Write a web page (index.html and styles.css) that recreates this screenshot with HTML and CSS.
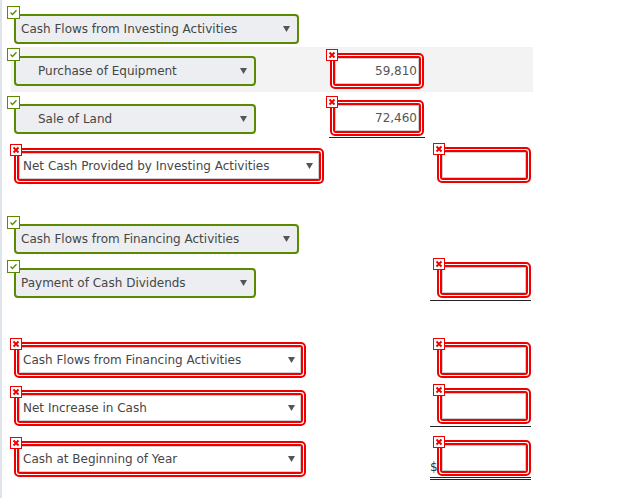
FILE: index.html
```html
<!DOCTYPE html>
<html>
<head>
<meta charset="utf-8">
<link rel="stylesheet" href="styles.css">
</head>
<body>
<div class="page">

  <div class="row r1">
    <div class="lab">
      <div class="sel ok w-long">
        <span class="chk"><svg viewBox="0 0 11 11" width="11" height="11"><path d="M2.5 5.5 L4.5 7.5 L8.5 3.2" fill="none" stroke="#5a8a00" stroke-width="1.3"/></svg></span>
        <span class="txt">Cash Flows from Investing Activities</span>
        <svg class="arr" viewBox="0 0 7 6" width="7" height="6"><path d="M0 0 H7 L3.5 6 Z" fill="#555"/></svg>
      </div>
    </div>
  </div>

  <div class="row r2 band">
    <div class="lab">
      <div class="sel ok w-short indent">
        <span class="chk"><svg viewBox="0 0 11 11" width="11" height="11"><path d="M2.5 5.5 L4.5 7.5 L8.5 3.2" fill="none" stroke="#5a8a00" stroke-width="1.3"/></svg></span>
        <span class="txt">Purchase of Equipment</span>
        <svg class="arr" viewBox="0 0 7 6" width="7" height="6"><path d="M0 0 H7 L3.5 6 Z" fill="#555"/></svg>
      </div>
    </div>
    <div class="c1">
      <div class="inp">
        <span class="xmark"><svg viewBox="0 0 10 10" width="10" height="10"><path d="M2.5 2.5 L7.5 7.5 M7.5 2.5 L2.5 7.5" stroke="#e00" stroke-width="2"/></svg></span>
        <div class="inner"><div class="field num">59,810</div></div>
      </div>
    </div>
  </div>

  <div class="row r3">
    <div class="lab">
      <div class="sel ok w-short indent">
        <span class="chk"><svg viewBox="0 0 11 11" width="11" height="11"><path d="M2.5 5.5 L4.5 7.5 L8.5 3.2" fill="none" stroke="#5a8a00" stroke-width="1.3"/></svg></span>
        <span class="txt">Sale of Land</span>
        <svg class="arr" viewBox="0 0 7 6" width="7" height="6"><path d="M0 0 H7 L3.5 6 Z" fill="#555"/></svg>
      </div>
    </div>
    <div class="c1 under">
      <div class="inp">
        <span class="xmark"><svg viewBox="0 0 10 10" width="10" height="10"><path d="M2.5 2.5 L7.5 7.5 M7.5 2.5 L2.5 7.5" stroke="#e00" stroke-width="2"/></svg></span>
        <div class="inner"><div class="field num">72,460</div></div>
      </div>
    </div>
  </div>

  <div class="row r4">
    <div class="lab">
      <div class="sel bad w-xl">
        <span class="xmark"><svg viewBox="0 0 10 10" width="10" height="10"><path d="M2.5 2.5 L7.5 7.5 M7.5 2.5 L2.5 7.5" stroke="#e00" stroke-width="2"/></svg></span>
        <div class="inner"><div class="field">
          <span class="txt">Net Cash Provided by Investing Activities</span>
          <svg class="arr" viewBox="0 0 7 6" width="7" height="6"><path d="M0 0 H7 L3.5 6 Z" fill="#555"/></svg>
        </div></div>
      </div>
    </div>
    <div class="c1"></div>
    <div class="c2">
      <div class="inp">
        <span class="xmark"><svg viewBox="0 0 10 10" width="10" height="10"><path d="M2.5 2.5 L7.5 7.5 M7.5 2.5 L2.5 7.5" stroke="#e00" stroke-width="2"/></svg></span>
        <div class="inner"><div class="field num"></div></div>
      </div>
    </div>
  </div>

  <div class="row r5">
    <div class="lab">
      <div class="sel ok w-long">
        <span class="chk"><svg viewBox="0 0 11 11" width="11" height="11"><path d="M2.5 5.5 L4.5 7.5 L8.5 3.2" fill="none" stroke="#5a8a00" stroke-width="1.3"/></svg></span>
        <span class="txt">Cash Flows from Financing Activities</span>
        <svg class="arr" viewBox="0 0 7 6" width="7" height="6"><path d="M0 0 H7 L3.5 6 Z" fill="#555"/></svg>
      </div>
    </div>
  </div>

  <div class="row r6">
    <div class="lab">
      <div class="sel ok w-short">
        <span class="chk"><svg viewBox="0 0 11 11" width="11" height="11"><path d="M2.5 5.5 L4.5 7.5 L8.5 3.2" fill="none" stroke="#5a8a00" stroke-width="1.3"/></svg></span>
        <span class="txt">Payment of Cash Dividends</span>
        <svg class="arr" viewBox="0 0 7 6" width="7" height="6"><path d="M0 0 H7 L3.5 6 Z" fill="#555"/></svg>
      </div>
    </div>
    <div class="c1"></div>
    <div class="c2 under">
      <div class="inp">
        <span class="xmark"><svg viewBox="0 0 10 10" width="10" height="10"><path d="M2.5 2.5 L7.5 7.5 M7.5 2.5 L2.5 7.5" stroke="#e00" stroke-width="2"/></svg></span>
        <div class="inner"><div class="field num"></div></div>
      </div>
    </div>
  </div>

  <div class="row r7">
    <div class="lab">
      <div class="sel bad w-mid">
        <span class="xmark"><svg viewBox="0 0 10 10" width="10" height="10"><path d="M2.5 2.5 L7.5 7.5 M7.5 2.5 L2.5 7.5" stroke="#e00" stroke-width="2"/></svg></span>
        <div class="inner"><div class="field">
          <span class="txt">Cash Flows from Financing Activities</span>
          <svg class="arr" viewBox="0 0 7 6" width="7" height="6"><path d="M0 0 H7 L3.5 6 Z" fill="#555"/></svg>
        </div></div>
      </div>
    </div>
    <div class="c1"></div>
    <div class="c2">
      <div class="inp">
        <span class="xmark"><svg viewBox="0 0 10 10" width="10" height="10"><path d="M2.5 2.5 L7.5 7.5 M7.5 2.5 L2.5 7.5" stroke="#e00" stroke-width="2"/></svg></span>
        <div class="inner"><div class="field num"></div></div>
      </div>
    </div>
  </div>

  <div class="row r8">
    <div class="lab">
      <div class="sel bad w-mid">
        <span class="xmark"><svg viewBox="0 0 10 10" width="10" height="10"><path d="M2.5 2.5 L7.5 7.5 M7.5 2.5 L2.5 7.5" stroke="#e00" stroke-width="2"/></svg></span>
        <div class="inner"><div class="field">
          <span class="txt">Net Increase in Cash</span>
          <svg class="arr" viewBox="0 0 7 6" width="7" height="6"><path d="M0 0 H7 L3.5 6 Z" fill="#555"/></svg>
        </div></div>
      </div>
    </div>
    <div class="c1"></div>
    <div class="c2 under">
      <div class="inp">
        <span class="xmark"><svg viewBox="0 0 10 10" width="10" height="10"><path d="M2.5 2.5 L7.5 7.5 M7.5 2.5 L2.5 7.5" stroke="#e00" stroke-width="2"/></svg></span>
        <div class="inner"><div class="field num"></div></div>
      </div>
    </div>
  </div>

  <div class="row r9">
    <div class="lab">
      <div class="sel bad w-mid">
        <span class="xmark"><svg viewBox="0 0 10 10" width="10" height="10"><path d="M2.5 2.5 L7.5 7.5 M7.5 2.5 L2.5 7.5" stroke="#e00" stroke-width="2"/></svg></span>
        <div class="inner"><div class="field">
          <span class="txt">Cash at Beginning of Year</span>
          <svg class="arr" viewBox="0 0 7 6" width="7" height="6"><path d="M0 0 H7 L3.5 6 Z" fill="#555"/></svg>
        </div></div>
      </div>
    </div>
    <div class="c1"></div>
    <div class="c2 dbl">
      <span class="dollar">$</span>
      <div class="inp nomargin">
        <span class="xmark"><svg viewBox="0 0 10 10" width="10" height="10"><path d="M2.5 2.5 L7.5 7.5 M7.5 2.5 L2.5 7.5" stroke="#e00" stroke-width="2"/></svg></span>
        <div class="inner"><div class="field num"></div></div>
      </div>
    </div>
  </div>

</div>
</body>
</html>
```

FILE: styles.css
```css
html, body {
  margin: 0;
  padding: 0;
  background: #fff;
}

body {
  font-family: "DejaVu Sans", Verdana, sans-serif;
  font-size: 12px;
  color: #464646;
}

.page {
  box-sizing: border-box;
  min-height: 498px;
  border-left: 2px solid #dfe4ea;
  padding-left: 9px;
  display: flex;
  flex-direction: column;
}

.row {
  display: flex;
  align-items: flex-start;
  width: 522px;
  box-sizing: border-box;
  padding-left: 3px;
}

.band { background: #f3f3f3; height: 45px; }

.r1 { margin-top: 14px; }
.r2 { margin-top: 3px; }
.r2 .lab { padding-top: 9px; }
.r2 .c1 { padding-top: 6px; }
.r3 { margin-top: 8px; }
.r3 .lab { padding-top: 4px; }
.r4 { margin-top: 9px; }
.r4 .lab { padding-top: 1px; }
.r5 { margin-top: 40px; }
.r6 { margin-top: 8px; }
.r6 .lab { padding-top: 6px; }
.r7 { margin-top: 41px; }
.r8 { margin-top: 10px; }
.r8 .lab { padding-top: 2px; }
.r9 { margin-top: 13px; }
.r9 .lab { padding-top: 1px; }

.lab { width: 315px; flex: none; }
.c1 { width: 96px; flex: none; padding-left: 1px; box-sizing: border-box; }
.c2 {
  width: 101px;
  flex: none;
  margin-left: 5px;
  padding-left: 7px;
  box-sizing: border-box;
}

.under { border-bottom: 1px solid #222; padding-bottom: 1px; }
.c2.under { padding-bottom: 2px; }
.dbl {
  border-bottom: 3px double #222;
  padding-bottom: 1px;
  padding-left: 0;
  display: flex;
  align-items: flex-end;
}
.dollar {
  width: 7px;
  flex: none;
  font-size: 12px;
  line-height: 14px;
  margin-bottom: 2px;
  color: #333;
  overflow: visible;
  white-space: nowrap;
}

/* select-like boxes */
.sel {
  position: relative;
  box-sizing: border-box;
}

.sel.ok {
  height: 30px;
  border: 2px solid #5a8a00;
  border-radius: 4px;
  background: #eceef1;
  display: flex;
  align-items: center;
  justify-content: space-between;
  padding: 0 7px 0 5px;
}
.sel.ok.indent { padding-left: 22px; }

.w-long { width: 285px; }
.w-short { width: 242px; }
.w-xl { width: 310px; }
.w-mid { width: 292px; }

.sel.bad, .inp {
  height: 36px;
  border: 2px solid #e00;
  border-radius: 5px;
  padding: 1px;
  background: #fff;
}

.inner {
  box-sizing: border-box;
  height: 100%;
  border: 2px solid #e00;
  border-radius: 3px;
}

.field {
  box-sizing: border-box;
  height: 100%;
  border: 1px solid #cfcfcf;
  background: #fff;
  display: flex;
  align-items: center;
  justify-content: space-between;
  padding: 0 5px 0 3px;
}

.field.num {
  justify-content: flex-end;
  padding-right: 1px;
  color: #555;
}

.txt { white-space: nowrap; }
.arr { flex: none; }

.inp {
  position: relative;
  width: 94px;
  box-sizing: border-box;
}

.chk {
  position: absolute;
  left: -9px;
  top: -10px;
  width: 13px;
  height: 13px;
  box-sizing: border-box;
  border: 1px solid #5a8a00;
  background: #fff;
  display: flex;
  align-items: center;
  justify-content: center;
}

.xmark {
  position: absolute;
  left: -6px;
  top: -6px;
  width: 12px;
  height: 12px;
  box-sizing: border-box;
  border: 1px solid #e00;
  background: #fff;
  display: flex;
  align-items: center;
  justify-content: center;
  z-index: 2;
}
```
